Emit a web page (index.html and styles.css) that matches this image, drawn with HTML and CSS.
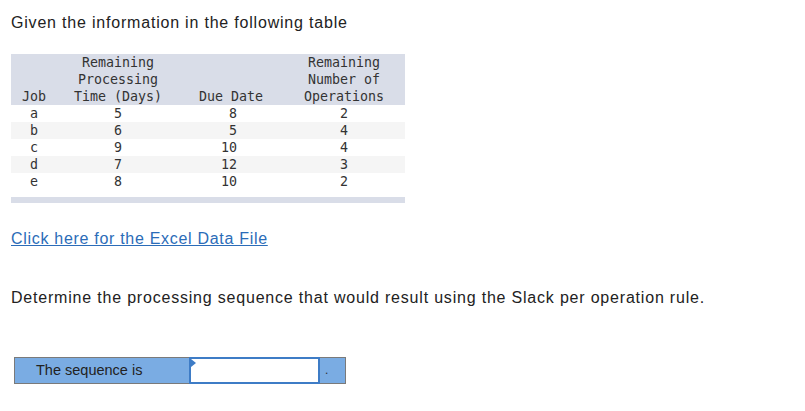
FILE: index.html
```html
<!DOCTYPE html>
<html>
<head>
<meta charset="utf-8">
<link rel="stylesheet" href="styles.css">
</head>
<body>
<p class="intro">Given the information in the following table</p>
<div class="tablewrap">
  <table class="data">
    <thead>
      <tr>
        <th class="c-job">Job</th>
        <th class="c-time">Remaining<br>Processing<br>Time (Days)</th>
        <th class="c-due">Due Date</th>
        <th class="c-ops">Remaining<br>Number of<br>Operations</th>
      </tr>
    </thead>
    <tbody>
      <tr><td class="c-job">a</td><td class="c-time">5</td><td class="c-due num">8</td><td class="c-ops">2</td></tr>
      <tr class="alt"><td class="c-job">b</td><td class="c-time">6</td><td class="c-due num">5</td><td class="c-ops">4</td></tr>
      <tr><td class="c-job">c</td><td class="c-time">9</td><td class="c-due num">10</td><td class="c-ops">4</td></tr>
      <tr class="alt"><td class="c-job">d</td><td class="c-time">7</td><td class="c-due num">12</td><td class="c-ops">3</td></tr>
      <tr><td class="c-job">e</td><td class="c-time">8</td><td class="c-due num">10</td><td class="c-ops">2</td></tr>
    </tbody>
  </table>
  <div class="tablefoot"></div>
</div>
<a class="link" href="#">Click here for the Excel Data File</a>
<p class="question">Determine the processing sequence that would result using the Slack per operation rule.</p>
<div class="answer">
  <div class="label">The sequence is</div>
  <div class="input"><span class="flag"></span></div>
  <div class="end">.</div>
</div>
</body>
</html>
```
FILE: styles.css
```css
html, body {
  margin: 0;
  padding: 0;
  background: #fff;
}
body {
  font-family: "Liberation Sans", Arial, sans-serif;
  color: #222;
  padding: 13px 0 0 11px;
}
.intro {
  margin: 0;
  font-size: 16px;
  line-height: 19px;
  letter-spacing: 0.8px;
}
.tablewrap {
  margin-top: 22px;
  width: 394px;
}
.data {
  border-collapse: collapse;
  width: 394px;
  font-family: "DejaVu Sans Mono", "Liberation Mono", monospace;
  font-size: 13.3px;
  color: #333;
  table-layout: fixed;
}
.data th, .data td {
  padding: 0;
  text-align: center;
  font-weight: normal;
  line-height: 17px;
  height: 17px;
}
.data th {
  vertical-align: bottom;
}
.data thead tr {
  background: #d9dde8;
}
.data tr.alt {
  background: #f5f5f5;
}
.c-job { width: 46px; }
.c-time { width: 122px; }
.c-due { width: 104px; }
.c-ops { width: 122px; }
.data td.num {
  text-align: right;
  padding-right: 46px;
}
.tablefoot {
  margin-top: 7px;
  height: 6px;
  background: #d9dde8;
}
.link {
  display: inline-block;
  margin-top: 26px;
  font-size: 16px;
  line-height: 19px;
  letter-spacing: 0.7px;
  color: #2b6cb8;
  text-decoration: underline;
}
.question {
  margin: 40px 0 0 0;
  font-size: 16px;
  line-height: 19px;
  letter-spacing: 0.8px;
}
.answer {
  display: flex;
  margin: 50px 0 0 3px;
  width: 332px;
  height: 27px;
}
.label {
  width: 175px;
  background: #7aace3;
  border: 1px solid #7a7a7a;
  border-right: none;
  font-size: 14.5px;
  line-height: 25px;
  color: #222;
  padding-left: 21px;
  box-sizing: border-box;
}
.input {
  position: relative;
  width: 131px;
  background: #fff;
  border: 2px solid #3e7cc6;
  box-sizing: border-box;
}
.flag {
  position: absolute;
  left: 0;
  top: 0;
  width: 0;
  height: 0;
  border-top: 4px solid transparent;
  border-bottom: 4px solid transparent;
  border-left: 5px solid #3e7cc6;
}
.end {
  width: 26px;
  background: #7aace3;
  border: 1px solid #7a7a7a;
  border-left: none;
  box-sizing: border-box;
  font-size: 12px;
  line-height: 25px;
  padding-left: 5px;
  color: #333;
}
```
